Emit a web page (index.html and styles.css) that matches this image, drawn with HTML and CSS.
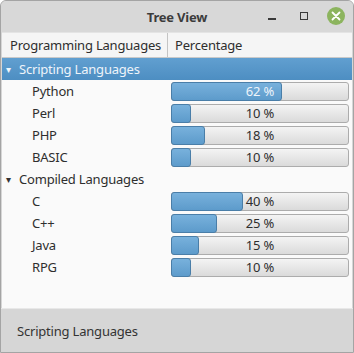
FILE: index.html
```html
<!DOCTYPE html>
<html lang="en">
<head>
  <meta charset="UTF-8">
  <title>Tree View</title>
  <link rel="stylesheet" href="styles.css">
</head>
<body>
  <div class="window">
    <div class="titlebar">
      <span class="title">Tree View</span>
      <div class="controls">
        <span class="btn-min"></span>
        <span class="btn-max"></span>
        <span class="btn-close">
          <svg width="18" height="18" viewBox="0 0 18 18">
            <circle cx="9" cy="9" r="9" fill="#8cb45e"/>
            <path d="M5.5 5.5 L12.5 12.5 M12.5 5.5 L5.5 12.5" stroke="#fff" stroke-width="1.8" stroke-linecap="round"/>
          </svg>
        </span>
      </div>
    </div>

    <div class="header">
      <div class="col-name">Programming Languages</div>
      <div class="col-pct">Percentage</div>
    </div>

    <div class="tree">
      <div class="row group selected">
        <span class="arrow">&#9662;</span>Scripting Languages
      </div>
      <div class="row"><span class="name">Python</span><div class="bar"><div class="fill" style="width:62%"></div><span class="label light">62 %</span></div></div>
      <div class="row"><span class="name">Perl</span><div class="bar"><div class="fill" style="width:10%"></div><span class="label">10 %</span></div></div>
      <div class="row"><span class="name">PHP</span><div class="bar"><div class="fill" style="width:18%"></div><span class="label">18 %</span></div></div>
      <div class="row"><span class="name">BASIC</span><div class="bar"><div class="fill" style="width:10%"></div><span class="label">10 %</span></div></div>
      <div class="row group">
        <span class="arrow">&#9662;</span>Compiled Languages
      </div>
      <div class="row"><span class="name">C</span><div class="bar"><div class="fill" style="width:40%"></div><span class="label">40 %</span></div></div>
      <div class="row"><span class="name">C++</span><div class="bar"><div class="fill" style="width:25%"></div><span class="label">25 %</span></div></div>
      <div class="row"><span class="name">Java</span><div class="bar"><div class="fill" style="width:15%"></div><span class="label">15 %</span></div></div>
      <div class="row"><span class="name">RPG</span><div class="bar"><div class="fill" style="width:10%"></div><span class="label">10 %</span></div></div>
    </div>

    <div class="statusbar">Scripting Languages</div>
  </div>
</body>
</html>
```

FILE: styles.css
```css
* { box-sizing: border-box; }
body {
  margin: 0;
  font-family: 'Noto Sans', 'DejaVu Sans', sans-serif;
  font-size: 13px;
  letter-spacing: -0.2px;
  color: #2e2e2e;
  background: #fff;
}
.window {
  width: 354px;
  height: 353px;
  display: flex;
  flex-direction: column;
  border: 1px solid #a4a4a4;
  border-radius: 6px 6px 0 0;
  background: #d6d6d6;
  overflow: hidden;
}
.titlebar {
  height: 31px;
  position: relative;
  display: flex;
  align-items: center;
  justify-content: center;
  background: #d8d8d8;
}
.title {
  font-weight: bold;
  color: #3c3c3c;
}
.controls {
  position: absolute;
  right: 8px;
  top: 6px;
  display: flex;
  align-items: center;
}
.btn-min {
  width: 8px;
  height: 2px;
  background: #3a3a3a;
  margin-top: 5px;
  margin-right: 24px;
}
.btn-max {
  width: 8px;
  height: 8px;
  border: 1px solid #3a3a3a;
  margin-right: 19px;
}
.btn-close {
  width: 18px;
  height: 18px;
  display: block;
}
.btn-close svg { display: block; }
.header {
  display: flex;
  height: 26px;
  background: #f5f5f5;
  border-bottom: 1px solid #c9c9c9;
  border-top: 1px solid #e4e4e4;
  margin: 0 1px;
}
.col-name {
  width: 166px;
  padding-left: 8px;
  line-height: 24px;
  border-right: 1px solid #c4c4c4;
}
.col-pct {
  padding-left: 7px;
  line-height: 24px;
}
.tree {
  flex: 1;
  background: #fafafa;
  margin: 0 1px;
  padding-bottom: 30px;
}
.row {
  height: 22px;
  display: flex;
  align-items: center;
}
.row .name {
  width: 169px;
  padding-left: 30px;
}
.group {
  padding-left: 4px;
}
.group .arrow {
  font-size: 10px;
  width: 13px;
  color: #333;
}
.selected {
  background: linear-gradient(#619fd0, #4d8ec2);
  color: #eef4fa;
}
.selected .arrow { color: #eef4fa; }
.bar {
  position: relative;
  width: 178px;
  height: 19px;
  border: 1px solid #acacac;
  border-radius: 3px;
  background: linear-gradient(#f4f4f4, #dadada);
}
.fill {
  height: 100%;
  margin: -1px 0 0 -1px;
  box-sizing: content-box;
  border: 1px solid #4a7ea8;
  border-radius: 3px;
  background: linear-gradient(#78b1dc, #5d9bcb);
}
.label {
  position: absolute;
  left: 0;
  right: 0;
  top: 0;
  line-height: 17px;
  text-align: center;
  color: #2e2e2e;
}
.label.light { color: #eef4fa; }
.statusbar {
  height: 44px;
  padding-left: 16px;
  line-height: 44px;
  background: #d6d6d6;
  color: #333;
  border-top: 1px solid #e8e8e8;
}
```
